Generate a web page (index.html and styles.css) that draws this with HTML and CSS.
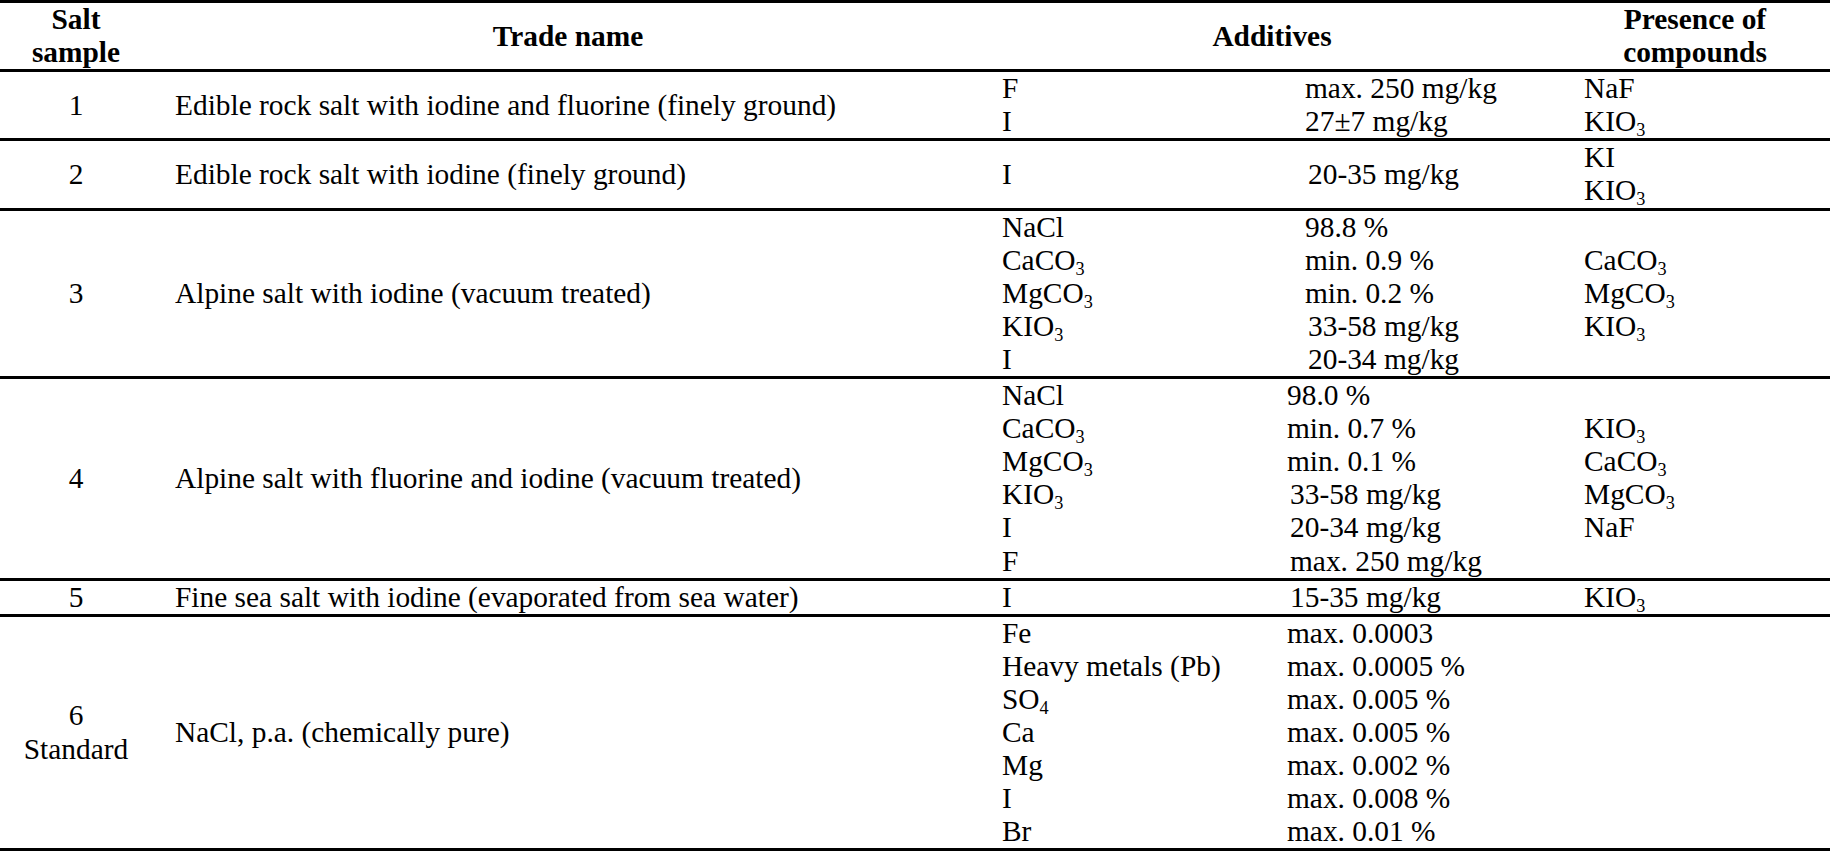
FILE: index.html
```html
<!DOCTYPE html>
<html lang="en">
<head>
<meta charset="utf-8">
<title>Salt samples</title>
<link rel="stylesheet" href="styles.css">
</head>
<body>
<table class="salt">
  <colgroup>
    <col class="c-sample">
    <col class="c-trade">
    <col class="c-add">
    <col class="c-pres">
  </colgroup>
  <thead>
    <tr>
      <th class="sample">Salt<br>sample</th>
      <th>Trade name</th>
      <th>Additives</th>
      <th>Presence of<br>compounds</th>
    </tr>
  </thead>
  <tbody>
    <tr>
      <td class="sample">1</td>
      <td class="trade">Edible rock salt with iodine and fluorine (finely ground)</td>
      <td class="add">
        <div class="pairs pairs-a">
          <span>F</span><span>max. 250 mg/kg</span>
          <span>I</span><span>27±7 mg/kg</span>
        </div>
      </td>
      <td class="pres">NaF<br>KIO<sub>3</sub></td>
    </tr>
    <tr>
      <td class="sample">2</td>
      <td class="trade">Edible rock salt with iodine (finely ground)</td>
      <td class="add">
        <div class="pairs pairs-a">
          <span>I</span><span class="nudge">20-35 mg/kg</span>
        </div>
      </td>
      <td class="pres">KI<br>KIO<sub>3</sub></td>
    </tr>
    <tr>
      <td class="sample">3</td>
      <td class="trade">Alpine salt with iodine (vacuum treated)</td>
      <td class="add">
        <div class="pairs pairs-a">
          <span>NaCl</span><span>98.8 %</span>
          <span>CaCO<sub>3</sub></span><span>min. 0.9 %</span>
          <span>MgCO<sub>3</sub></span><span>min. 0.2 %</span>
          <span>KIO<sub>3</sub></span><span class="nudge">33-58 mg/kg</span>
          <span>I</span><span class="nudge">20-34 mg/kg</span>
        </div>
      </td>
      <td class="pres">CaCO<sub>3</sub><br>MgCO<sub>3</sub><br>KIO<sub>3</sub></td>
    </tr>
    <tr>
      <td class="sample">4</td>
      <td class="trade">Alpine salt with fluorine and iodine (vacuum treated)</td>
      <td class="add">
        <div class="pairs pairs-b">
          <span>NaCl</span><span>98.0 %</span>
          <span>CaCO<sub>3</sub></span><span>min. 0.7 %</span>
          <span>MgCO<sub>3</sub></span><span>min. 0.1 %</span>
          <span>KIO<sub>3</sub></span><span class="nudge">33-58 mg/kg</span>
          <span>I</span><span class="nudge">20-34 mg/kg</span>
          <span>F</span><span class="nudge">max. 250 mg/kg</span>
        </div>
      </td>
      <td class="pres">KIO<sub>3</sub><br>CaCO<sub>3</sub><br>MgCO<sub>3</sub><br>NaF</td>
    </tr>
    <tr>
      <td class="sample">5</td>
      <td class="trade">Fine sea salt with iodine (evaporated from sea water)</td>
      <td class="add">
        <div class="pairs pairs-b">
          <span>I</span><span class="nudge">15-35 mg/kg</span>
        </div>
      </td>
      <td class="pres">KIO<sub>3</sub></td>
    </tr>
    <tr>
      <td class="sample">6<br>Standard</td>
      <td class="trade">NaCl, p.a. (chemically pure)</td>
      <td class="add">
        <div class="pairs pairs-b">
          <span>Fe</span><span>max. 0.0003</span>
          <span>Heavy metals (Pb)</span><span>max. 0.0005 %</span>
          <span>SO<sub>4</sub></span><span>max. 0.005 %</span>
          <span>Ca</span><span>max. 0.005 %</span>
          <span>Mg</span><span>max. 0.002 %</span>
          <span>I</span><span>max. 0.008 %</span>
          <span>Br</span><span>max. 0.01 %</span>
        </div>
      </td>
      <td class="pres"></td>
    </tr>
  </tbody>
</table>
</body>
</html>
```

FILE: styles.css
```css
html, body {
  margin: 0;
  padding: 0;
  background: #ffffff;
}

body {
  font-family: "Liberation Serif", "Times New Roman", serif;
  font-size: 29.4px;
  line-height: 33.1px;
  color: #000000;
}

.salt {
  width: 1830px;
  border-collapse: collapse;
  table-layout: fixed;
}

.c-sample { width: 152px; }
.c-trade { width: 832px; }
.c-add { width: 576px; }
.c-pres { width: 270px; }

.salt th,
.salt td {
  padding: 0;
  vertical-align: middle;
  border-bottom: 3px solid #000000;
  text-align: left;
}

.salt thead tr {
  border-top: 3px solid #000000;
}

.salt th {
  font-weight: bold;
  text-align: center;
}

.salt .sample {
  text-align: center;
}

.trade {
  padding-left: 23px !important;
  white-space: nowrap;
}

.add {
  padding-left: 18px !important;
}

.pres {
  padding-left: 24px !important;
}

.pairs {
  display: grid;
  white-space: nowrap;
}

.pairs-a {
  grid-template-columns: 303px 1fr;
}

.pairs-b {
  grid-template-columns: 285px 1fr;
}

.nudge {
  padding-left: 3px;
}

sub {
  font-size: 0.62em;
  line-height: 0;
  vertical-align: -0.28em;
}
```
